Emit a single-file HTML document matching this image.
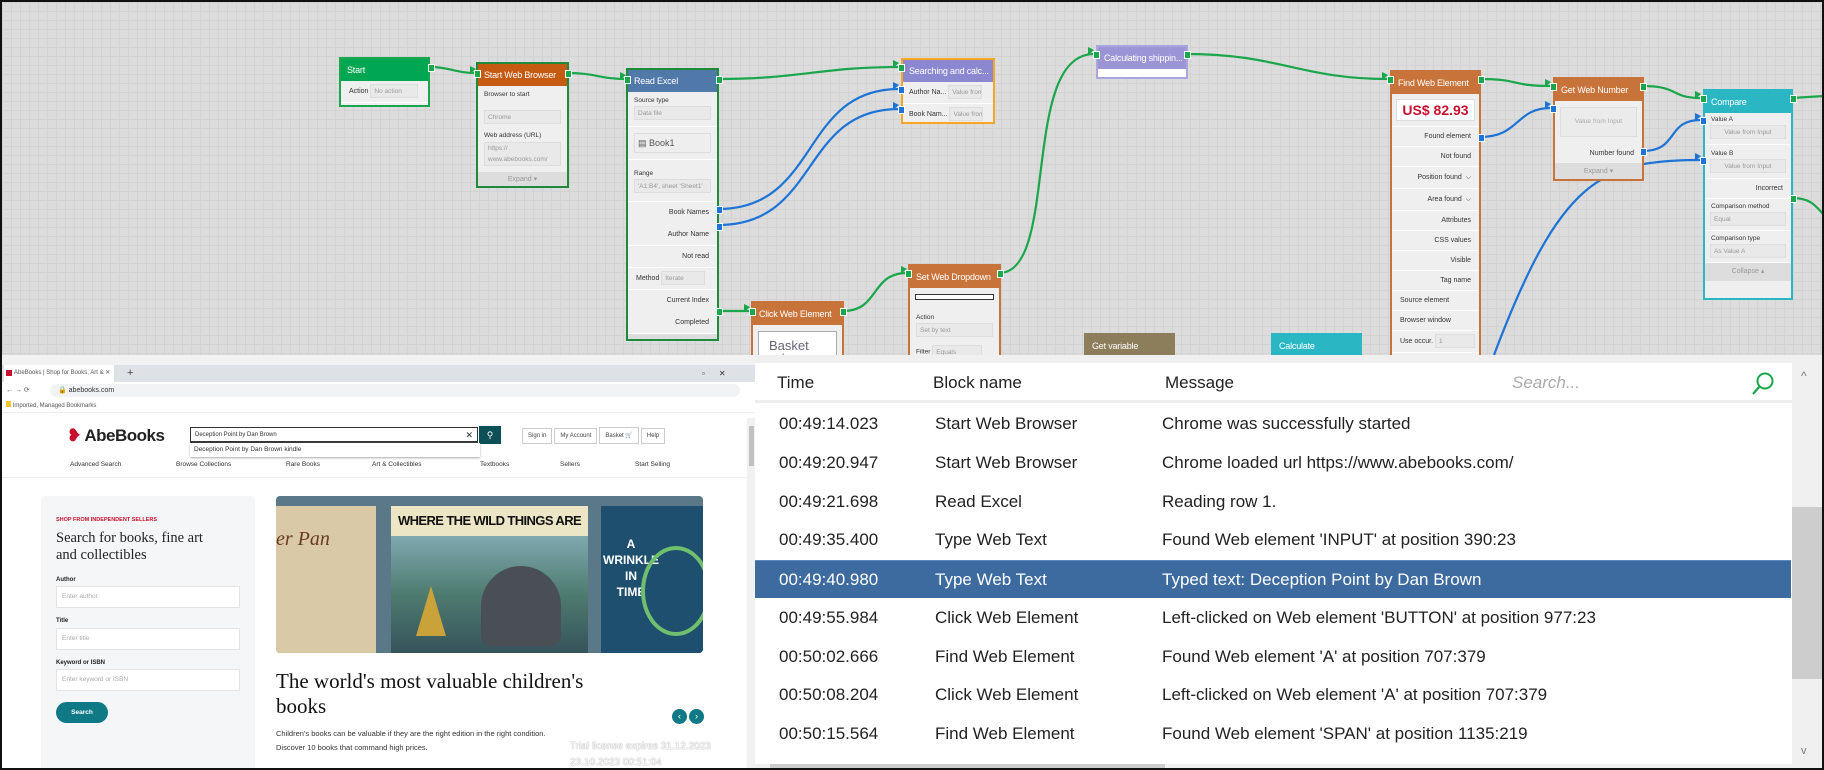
<!DOCTYPE html>
<html><head><meta charset="utf-8">
<style>
*{box-sizing:border-box;margin:0;padding:0}
body{width:1824px;height:770px;overflow:hidden;background:#fff;font-family:"Liberation Sans",sans-serif;position:relative}
.abs{position:absolute}
#canvas{left:0;top:0;width:1824px;height:355px;background-color:#dcdcdc;
background-image:linear-gradient(#d3d3d3 1px,transparent 1px),linear-gradient(90deg,#d3d3d3 1px,transparent 1px);background-size:9px 9px;overflow:hidden;border:2px solid #111;border-bottom:none}
.node{position:absolute;border:2px solid;background:#efefef;font-size:8px;color:#333;overflow:hidden}
.hd{height:22px;color:#fff;font-size:9px;line-height:22px;padding-left:6px;white-space:nowrap;overflow:hidden;text-overflow:ellipsis;letter-spacing:-0.2px}
.row{height:22px;line-height:22px;border-bottom:1px solid #fff;padding:0 8px;font-size:7px;white-space:nowrap;position:relative}
.r{text-align:right}
.fld{display:inline-block;border:1px solid #ddd;background:#e9e9e9;color:#999;height:14px;line-height:13px;padding:0 3px;font-size:6.5px;vertical-align:middle;overflow:hidden;white-space:nowrap}
.port{position:absolute;width:7px;height:8px;border:1px solid #fff}
.g{background:#1aa64b}.b{background:#1d74d6}
.foot{height:16px;line-height:16px;text-align:center;color:#999;font-size:7px;background:#ddd}
#log{left:755px;top:355px;width:1069px;height:415px;background:#fff}
.lr{position:absolute;left:0;width:1036px;height:38px;font-size:17px;color:#222;line-height:38px}
.lr span{position:absolute}
.lr .t{left:24px}.lr .bn{left:180px}.lr .m{left:407px}
</style></head><body>

<div id="canvas" class="abs">
<svg class="abs" style="left:-2px;top:-2px" width="1824" height="355">
<g fill="none" stroke-width="2.2">
<path d="M430,67 C450,67 455,73 476,73" stroke="#1aa64b"/>
<path d="M568,73 C595,73 600,79 626,79" stroke="#1aa64b"/>
<path d="M718,79 C800,79 820,67 899,67" stroke="#1aa64b"/>
<path d="M718,311 L750,311" stroke="#1aa64b"/>
<path d="M843,311 C880,311 870,273 907,273" stroke="#1aa64b"/>
<path d="M999,273 C1060,273 1020,54 1094,54" stroke="#1aa64b"/>
<path d="M1186,54 C1280,54 1300,79 1388,79" stroke="#1aa64b"/>
<path d="M1480,79 C1520,79 1510,86 1551,86" stroke="#1aa64b"/>
<path d="M1642,86 C1680,86 1670,98 1701,98" stroke="#1aa64b"/>
<path d="M1792,98 L1824,96" stroke="#1aa64b"/>
<path d="M1792,198 C1810,198 1815,205 1824,215" stroke="#1aa64b"/>
<path d="M718,209 C820,209 800,89 899,89" stroke="#1d74d6"/>
<path d="M718,225 C820,225 800,109 899,109" stroke="#1d74d6"/>
<path d="M1480,137 C1520,137 1515,108 1551,108" stroke="#1d74d6"/>
<path d="M1642,151 C1680,151 1665,120 1701,120" stroke="#1d74d6"/>
<path d="M1494,355 C1560,180 1600,160 1701,160" stroke="#1d74d6"/>
</g>
<g fill="#1aa64b"><path d="M476,69 l-6,-3 v8z"/><path d="M626,75 l-6,-3 v8z"/><path d="M899,63 l-6,-3 v8z"/><path d="M750,307 l-6,-3 v8z"/><path d="M907,269 l-6,-3 v8z"/><path d="M1094,50 l-6,-3 v8z"/><path d="M1388,75 l-6,-3 v8z"/><path d="M1551,82 l-6,-3 v8z"/><path d="M1701,94 l-6,-3 v8z"/></g>
<g fill="#1d74d6"><path d="M899,85 l-6,-3 v8z"/><path d="M899,105 l-6,-3 v8z"/><path d="M1551,104 l-6,-3 v8z"/><path d="M1701,116 l-6,-3 v8z"/><path d="M1701,156 l-6,-3 v8z"/></g>
</svg>

<div class="node" style="left:337px;top:55px;width:91px;height:50px;border-color:#1aa64b">
<div class="hd" style="background:#00a651">Start</div>
<div class="row">Action <span class="fld" style="width:48px">No action</span></div>
</div>
<div class="node" style="left:474px;top:60px;width:93px;height:126px;border-color:#1e8a3a">
<div class="hd" style="background:#c55a11">Start Web Browser</div>
<div style="padding:5px 6px;font-size:6.5px;height:24px">Browser to start</div>
<div style="padding:0 6px"><span class="fld" style="width:77px">Chrome</span></div>
<div style="padding:8px 6px 3px;font-size:6.5px">Web address (URL)</div>
<div style="padding:0 6px"><span class="fld" style="width:77px;height:24px;line-height:11px;white-space:normal">https://<br>www.abebooks.com/</span></div>
<div class="foot" style="margin-top:6px">Expand ▾</div>
</div>
<div class="node" style="left:624px;top:66px;width:93px;height:273px;border-color:#1e8a3a">
<div class="hd" style="background:#5078a8">Read Excel</div>
<div style="padding:5px 6px 2px;font-size:6.5px">Source type</div>
<div style="padding:0 6px 6px;border-bottom:1px solid #fff"><span class="fld" style="width:77px">Data file</span></div>
<div style="padding:6px;border-bottom:1px solid #fff"><span class="fld" style="width:77px;height:20px;line-height:18px;background:#eee;color:#555;font-size:9px">▤ Book1</span></div>
<div style="padding:10px 6px 2px;font-size:6.5px">Range</div>
<div style="padding:0 6px 8px;border-bottom:1px solid #fff"><span class="fld" style="width:77px">'A1:B4', sheet 'Sheet1'</span></div>
<div class="row r" style="border:none">Book Names</div>
<div class="row r">Author Name</div>
<div class="row r">Not read</div>
<div class="row">Method <span class="fld" style="width:44px">Iterate</span></div>
<div class="row r" style="border:none">Current Index</div>
<div class="row r">Completed</div>
<div class="foot" style="height:20px;line-height:20px">Collapse ▴</div>
</div>
<div class="node" style="left:749px;top:299px;width:93px;height:60px;border-color:#c8733a">
<div class="hd" style="background:#c8733a">Click Web Element</div>
<div style="margin:6px 5px;height:30px;background:#fff;border:1px solid #aaa;color:#667;font-size:13px;padding:6px 10px">Basket 🛒</div>
</div>
<div class="node" style="left:899px;top:56px;width:94px;height:66px;border-color:#f5a623">
<div class="hd" style="background:#8c87d1">Searching and calc...</div>
<div class="row" style="padding:0 6px">Author Na... <span class="fld" style="width:34px">Value from</span></div>
<div class="row" style="padding:0 6px">Book Nam... <span class="fld" style="width:34px">Value from</span></div>
</div>
<div class="node" style="left:1094px;top:43px;width:92px;height:34px;border-color:#a9a5dd;background:#fff">
<div class="hd" style="background:#9b95d6">Calculating shippin...</div>
</div>
<div class="node" style="left:906px;top:262px;width:93px;height:100px;border-color:#c8733a">
<div class="hd" style="background:#c8733a">Set Web Dropdown</div>
<div style="margin:6px 5px;height:6px;border:1px solid #333;background:#fff"></div>
<div style="padding:8px 6px 2px;font-size:6.5px">Action</div>
<div style="padding:0 6px"><span class="fld" style="width:77px">Set by text</span></div>
<div style="padding:8px 6px;font-size:6.5px">Filter <span class="fld" style="width:50px">Equals</span></div>
</div>
<div class="node" style="left:1082px;top:331px;width:91px;height:30px;border-color:#8c7e5a">
<div class="hd" style="background:#8c7e5a">Get variable</div></div>
<div class="node" style="left:1269px;top:331px;width:91px;height:30px;border-color:#2ab7c3">
<div class="hd" style="background:#2ab7c3">Calculate</div></div>
<div class="node" style="left:1388px;top:68px;width:91px;height:295px;border-color:#c8733a">
<div class="hd" style="background:#c8733a">Find Web Element</div>
<div style="padding:5px 4px;border-bottom:1px solid #fff"><div style="background:#fff;border:1px solid #ddd;height:22px;color:#c8102e;font-weight:bold;font-size:14px;line-height:21px;text-align:center;white-space:nowrap">US$ 82.93</div></div>
<div class="row r" style="height:20px;line-height:20px">Found element</div>
<div class="row r" style="height:20px;line-height:20px">Not found</div>
<div class="row r" style="height:22px">Position found &nbsp;⌵</div>
<div class="row r" style="height:22px">Area found &nbsp;⌵</div>
<div class="row r" style="height:20px;line-height:20px">Attributes</div>
<div class="row r" style="height:20px;line-height:20px">CSS values</div>
<div class="row r" style="height:20px;line-height:20px">Visible</div>
<div class="row r" style="height:20px;line-height:20px">Tag name</div>
<div class="row" style="height:20px;line-height:20px">Source element</div>
<div class="row" style="height:20px;line-height:20px">Browser window</div>
<div class="row">Use occur. <span class="fld" style="width:40px">1</span></div>
</div>
<div class="node" style="left:1551px;top:75px;width:91px;height:104px;border-color:#c8733a">
<div class="hd" style="background:#c8733a">Get Web Number</div>
<div style="margin:6px 5px;height:30px;border:1px solid #ddd;background:#ebebeb;color:#aaa;font-size:6.5px;line-height:28px;text-align:center">Value from Input</div>
<div class="row r" style="border:none;height:20px">Number found</div>
<div class="foot" style="height:18px;line-height:18px">Expand ▾</div>
</div>
<div class="node" style="left:1701px;top:87px;width:90px;height:211px;border-color:#2ab7c3">
<div class="hd" style="background:#2ab7c3">Compare</div>
<div style="padding:3px 6px 2px;font-size:6.5px">Value A</div>
<div style="padding:0 5px 5px;border-bottom:1px solid #fff"><span class="fld" style="width:76px;text-align:center">Value from Input</span></div>
<div style="padding:5px 6px 2px;font-size:6.5px">Value B</div>
<div style="padding:0 5px 5px;border-bottom:1px solid #fff"><span class="fld" style="width:76px;text-align:center">Value from Input</span></div>
<div class="row r" style="height:20px;line-height:20px">Incorrect</div>
<div style="padding:4px 6px 2px;font-size:6.5px">Comparison method</div>
<div style="padding:0 5px 4px;border-bottom:1px solid #fff"><span class="fld" style="width:76px">Equal</span></div>
<div style="padding:4px 6px 2px;font-size:6.5px">Comparison type</div>
<div style="padding:0 5px 4px;border-bottom:1px solid #fff"><span class="fld" style="width:76px">As Value A</span></div>
<div class="foot" style="height:18px;line-height:18px">Collapse ▴</div>
</div>

<div class="port g" style="left:426px;top:62px"></div>
<div class="port g" style="left:472px;top:68px"></div><div class="port g" style="left:563px;top:68px"></div>
<div class="port g" style="left:622px;top:74px"></div><div class="port g" style="left:714px;top:74px"></div>
<div class="port b" style="left:714px;top:204px"></div><div class="port b" style="left:714px;top:221px"></div>
<div class="port g" style="left:714px;top:306px"></div>
<div class="port g" style="left:747px;top:306px"></div><div class="port g" style="left:838px;top:306px"></div>
<div class="port g" style="left:896px;top:62px"></div><div class="port b" style="left:896px;top:84px"></div><div class="port b" style="left:896px;top:104px"></div>
<div class="port g" style="left:1091px;top:49px"></div><div class="port g" style="left:1182px;top:49px"></div>
<div class="port g" style="left:903px;top:268px"></div><div class="port g" style="left:995px;top:268px"></div>
<div class="port g" style="left:1385px;top:74px"></div><div class="port g" style="left:1476px;top:74px"></div><div class="port b" style="left:1476px;top:132px"></div>
<div class="port g" style="left:1548px;top:81px"></div><div class="port b" style="left:1548px;top:103px"></div><div class="port g" style="left:1638px;top:81px"></div><div class="port b" style="left:1638px;top:146px"></div>
<div class="port g" style="left:1698px;top:93px"></div><div class="port b" style="left:1698px;top:115px"></div><div class="port b" style="left:1698px;top:155px"></div><div class="port g" style="left:1788px;top:93px"></div><div class="port g" style="left:1788px;top:193px"></div>
</div>

<div class="abs" style="left:0;top:355px;width:755px;height:415px;background:#fff;overflow:hidden;border-left:2px solid #111">
<div class="abs" style="left:0;top:0;width:755px;height:10px;background:#f2f2f2"></div>
<div class="abs" style="left:0;top:10px;width:755px;height:17px;background:#dee1e6"></div>
<div class="abs" style="left:2px;top:10px;width:110px;height:17px;background:#fff;font-size:6px;color:#555;line-height:17px;padding-left:10px">AbeBooks | Shop for Books, Art &amp; ✕</div>
<div class="abs" style="left:4px;top:15px;width:6px;height:6px;background:#c8102e"></div>
<div class="abs" style="left:125px;top:10px;font-size:11px;line-height:17px;color:#444">+</div>
<div class="abs" style="left:700px;top:10px;font-size:8px;line-height:17px;color:#333;letter-spacing:14px">▫✕</div>
<div class="abs" style="left:0;top:27px;width:755px;height:17px;background:#fff;font-size:7px;line-height:17px;color:#555;padding-left:4px">← → ⟳</div>
<div class="abs" style="left:48px;top:29px;width:690px;height:13px;border-radius:7px;background:#f1f3f4;font-size:7px;color:#333;line-height:13px;padding-left:8px">🔒 abebooks.com</div>
<div class="abs" style="left:0;top:44px;width:755px;height:14px;font-size:6px;color:#555;line-height:14px;padding-left:4px;border-bottom:1px solid #eee"><span style="background:#f4c430;display:inline-block;width:5px;height:6px"></span> Imported, Managed Bookmarks</div>
<div class="abs" style="left:65px;top:71px;font-size:17px;font-weight:bold;color:#222;letter-spacing:-0.5px"><span style="color:#c8102e">❥</span> AbeBooks</div>
<div class="abs" style="left:188px;top:72px;width:288px;height:16px;border:1px solid #333;border-bottom:2px solid #333;font-size:6px;line-height:14px;padding-left:4px;color:#333">Deception Point by Dan Brown<span style="float:right;padding-right:4px;font-size:9px">✕</span></div>
<div class="abs" style="left:477px;top:71px;width:22px;height:18px;background:#0d4f57;color:#fff;font-size:9px;text-align:center;line-height:18px">⚲</div>
<div class="abs" style="left:188px;top:88px;width:290px;height:14px;background:#fff;font-size:6.5px;line-height:14px;padding-left:4px;color:#333;box-shadow:0 1px 2px #aaa">Deception Point by Dan Brown kindle</div>
<div class="abs" style="left:520px;top:72px;font-size:6px;color:#444">
<span style="display:inline-block;border:1px solid #ccc;padding:4px 5px;margin-right:2px">Sign in</span><span style="display:inline-block;border:1px solid #ccc;padding:4px 5px;margin-right:2px">My Account</span><span style="display:inline-block;border:1px solid #ccc;padding:4px 5px;margin-right:2px">Basket 🛒</span><span style="display:inline-block;border:1px solid #ccc;padding:4px 5px">Help</span></div>
<div class="abs" style="left:68px;top:106px;width:620px;font-size:6.5px;color:#333">
<span class="abs" style="left:0">Advanced Search</span><span class="abs" style="left:106px">Browse Collections</span><span class="abs" style="left:216px">Rare Books</span><span class="abs" style="left:302px">Art &amp; Collectibles</span><span class="abs" style="left:410px">Textbooks</span><span class="abs" style="left:490px">Sellers</span><span class="abs" style="left:565px">Start Selling</span></div>
<div class="abs" style="left:0;top:122px;width:745px;height:1px;background:#eee"></div>
<div class="abs" style="left:39px;top:141px;width:214px;height:280px;background:#f4f6f7;border-radius:4px"></div>
<div class="abs" style="left:54px;top:162px;font-size:5.5px;color:#c8102e;font-weight:bold">SHOP FROM INDEPENDENT SELLERS</div>
<div class="abs" style="left:54px;top:175px;width:170px;font-family:'Liberation Serif',serif;font-size:14.5px;line-height:17px;color:#222">Search for books, fine art and collectibles</div>
<div class="abs" style="left:54px;top:222px;font-size:6px;font-weight:bold;color:#222">Author</div>
<div class="abs" style="left:54px;top:231px;width:184px;height:22px;background:#fff;border:1px solid #e4e4e4;font-size:6.5px;color:#aaa;line-height:20px;padding-left:5px">Enter author</div>
<div class="abs" style="left:54px;top:263px;font-size:6px;font-weight:bold;color:#222">Title</div>
<div class="abs" style="left:54px;top:273px;width:184px;height:22px;background:#fff;border:1px solid #e4e4e4;font-size:6.5px;color:#aaa;line-height:20px;padding-left:5px">Enter title</div>
<div class="abs" style="left:54px;top:305px;font-size:6px;font-weight:bold;color:#222">Keyword or ISBN</div>
<div class="abs" style="left:54px;top:314px;width:184px;height:22px;background:#fff;border:1px solid #e4e4e4;font-size:6.5px;color:#aaa;line-height:20px;padding-left:5px">Enter keyword or ISBN</div>
<div class="abs" style="left:54px;top:347px;width:52px;height:21px;background:#0f7a85;border-radius:11px;color:#fff;font-size:6.5px;font-weight:bold;text-align:center;line-height:21px">Search</div>
<div class="abs" style="left:274px;top:141px;width:427px;height:157px;background:#5a7888;border-radius:4px;overflow:hidden">
<div class="abs" style="left:0;top:10px;width:100px;height:150px;background:#d9c9a6"><div style="font-family:'Liberation Serif',serif;font-size:20px;color:#6a3b20;padding:22px 0 0 0;font-style:italic">er Pan</div></div>
<div class="abs" style="left:115px;top:10px;width:197px;height:150px;background:#3e6a6a">
<div style="background:#ece5c6;height:30px;font-size:13px;font-weight:bold;text-align:center;line-height:30px;color:#111;letter-spacing:-0.6px;white-space:nowrap">WHERE THE WILD THINGS ARE</div>
<div class="abs" style="left:0;top:30px;width:197px;height:120px;background:linear-gradient(180deg,#7fa8b0,#4d7a6e 50%,#35515a)"></div>
<div class="abs" style="left:90px;top:60px;width:80px;height:80px;background:#4a4f55;border-radius:40px 40px 10px 10px"></div>
<div class="abs" style="left:25px;top:80px;width:30px;height:50px;background:#c9a23a;clip-path:polygon(50% 0,100% 100%,0 100%)"></div>
</div>
<div class="abs" style="left:325px;top:10px;width:110px;height:150px;background:#1e4f6e">
<div style="color:#fff;font-weight:bold;font-size:12px;line-height:16px;text-align:center;width:60px;padding-top:30px">A<br>WRINKLE<br>IN<br>TIME</div>
<div class="abs" style="left:40px;top:40px;width:70px;height:90px;border:4px solid #6fbf6f;border-radius:50%"></div></div>
</div>
<div class="abs" style="left:274px;top:298px;width:368px;height:30px;background:#fff"></div>
<div class="abs" style="left:274px;top:314px;width:360px;font-family:'Liberation Serif',serif;font-size:21px;line-height:25px;color:#111">The world's most valuable children's books</div>
<div class="abs" style="left:670px;top:354px;width:15px;height:15px;border-radius:50%;background:#0f7a85;color:#fff;font-size:9px;text-align:center;line-height:15px">‹</div>
<div class="abs" style="left:687px;top:354px;width:15px;height:15px;border-radius:50%;background:#0f7a85;color:#fff;font-size:9px;text-align:center;line-height:15px">›</div>
<div class="abs" style="left:274px;top:372px;width:400px;font-size:7.5px;line-height:14px;color:#333">Children's books can be valuable if they are the right edition in the right condition.<br>Discover 10 books that command high prices.</div>
<div class="abs" style="left:568px;top:384px;font-size:10px;line-height:16px;color:#fff;text-shadow:0 0 1px #666">Trial license expires 31.12.2023<br>23.10.2023 00:51:04</div>
<div class="abs" style="left:745px;top:63px;width:8px;height:350px;background:#f1f1f1"><div style="margin-top:8px;height:40px;background:#c1c1c1;margin-left:2px;width:5px"></div></div>
</div>

<div id="log" class="abs">
<div class="abs" style="left:0;top:0;width:1069px;height:8px;background:#f0f0f0"></div>
<div class="abs" style="left:0;top:8px;width:1037px;height:40px;background:#fff;border-bottom:3px solid #eee;font-size:17px;color:#222;line-height:40px">
<span class="abs" style="left:22px">Time</span><span class="abs" style="left:178px">Block name</span><span class="abs" style="left:410px">Message</span>
<span class="abs" style="left:757px;color:#aaa;font-style:italic">Search...</span>
<svg class="abs" style="left:995px;top:8px" width="26" height="26" viewBox="0 0 26 26"><circle cx="15" cy="10" r="7.5" fill="none" stroke="#1aa64b" stroke-width="2"/><path d="M9.5,15.5 L3,23" stroke="#1aa64b" stroke-width="2.2"/></svg></div>
<div class="lr" style="top:50px"><span class="t">00:49:14.023</span><span class="bn">Start Web Browser</span><span class="m">Chrome was successfully started</span></div>
<div class="lr" style="top:89px"><span class="t">00:49:20.947</span><span class="bn">Start Web Browser</span><span class="m">Chrome loaded url https://www.abebooks.com/</span></div>
<div class="lr" style="top:128px"><span class="t">00:49:21.698</span><span class="bn">Read Excel</span><span class="m">Reading row 1.</span></div>
<div class="lr" style="top:166px"><span class="t">00:49:35.400</span><span class="bn">Type Web Text</span><span class="m">Found Web element 'INPUT' at position 390:23</span></div>
<div class="lr" style="top:205px;background:#3d6a9f;color:#fff;border-top:1px solid #5d8ac0"><span class="t">00:49:40.980</span><span class="bn">Type Web Text</span><span class="m">Typed text: Deception Point by Dan Brown</span></div>
<div class="lr" style="top:244px"><span class="t">00:49:55.984</span><span class="bn">Click Web Element</span><span class="m">Left-clicked on Web element 'BUTTON' at position 977:23</span></div>
<div class="lr" style="top:283px"><span class="t">00:50:02.666</span><span class="bn">Find Web Element</span><span class="m">Found Web element 'A' at position 707:379</span></div>
<div class="lr" style="top:321px"><span class="t">00:50:08.204</span><span class="bn">Click Web Element</span><span class="m">Left-clicked on Web element 'A' at position 707:379</span></div>
<div class="lr" style="top:360px"><span class="t">00:50:15.564</span><span class="bn">Find Web Element</span><span class="m">Found Web element 'SPAN' at position 1135:219</span></div>
<div class="abs" style="left:1037px;top:8px;width:30px;height:405px;background:#f0f0f0">
<div class="abs" style="left:9px;top:6px;font-size:12px;color:#777">^</div>
<div class="abs" style="left:0;top:144px;width:30px;height:172px;background:#cdcdcd"></div>
<div class="abs" style="left:9px;top:382px;font-size:11px;color:#777">v</div></div>
<div class="abs" style="left:0;top:409px;width:1069px;height:6px;background:#f0f0f0"><div style="margin-left:15px;width:395px;height:4px;background:#cdcdcd"></div></div>
</div>
<div class="abs" style="left:0;top:768px;width:1824px;height:2px;background:#111"></div>
<div class="abs" style="left:1822px;top:0;width:2px;height:770px;background:#111"></div>
</body></html>
